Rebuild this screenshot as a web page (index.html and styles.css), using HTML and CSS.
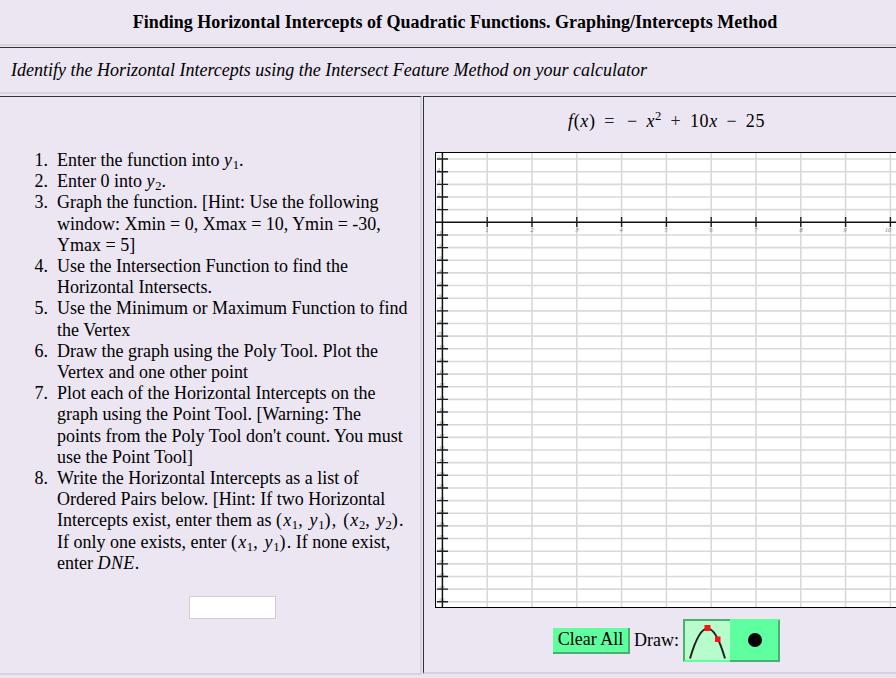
FILE: index.html
```html
<!DOCTYPE html>
<html lang="en">
<head>
<meta charset="utf-8">
<title>Finding Horizontal Intercepts of Quadratic Functions</title>
<link rel="stylesheet" href="styles.css">
</head>
<body>
<header class="title-bar"><h1>Finding Horizontal Intercepts of Quadratic Functions. Graphing/Intercepts Method</h1></header>
<section class="sub-bar"><p>Identify the Horizontal Intercepts using the Intersect Feature Method on your calculator</p></section>
<main class="panes">
  <section class="left">
    <ol class="steps">
      <li>Enter the function into <span class="m">y<sub>1</sub></span>.</li>
      <li>Enter <span class="n">0</span> into <span class="m">y<sub>2</sub></span>.</li>
      <li>Graph the function. [Hint: Use the following window: Xmin = 0, Xmax = 10, Ymin = -30, Ymax = 5]</li>
      <li>Use the Intersection Function to find the Horizontal Intersects.</li>
      <li>Use the Minimum or Maximum Function to find the Vertex</li>
      <li>Draw the graph using the Poly Tool. Plot the Vertex and one other point</li>
      <li>Plot each of the Horizontal Intercepts on the graph using the Point Tool. [Warning: The points from the Poly Tool don't count. You must use the Point Tool]</li>
      <li>Write the Horizontal Intercepts as a list of Ordered Pairs below. [Hint: If two Horizontal Intercepts exist, enter them as <span class="mg">(<span class="m">x<sub>1</sub></span>, <span class="m">y<sub>1</sub></span>), (<span class="m">x<sub>2</sub></span>, <span class="m">y<sub>2</sub></span>)</span>. If only one exists, enter <span class="mg">(<span class="m">x<sub>1</sub></span>, <span class="m">y<sub>1</sub></span>)</span>. If none exist, enter <span class="m dne">DNE</span>.</li>
    </ol>
    <input class="answer" type="text" aria-label="Answer">
  </section>
  <section class="right">
    <div class="formula"><span class="m">f</span>(<span class="m">x</span>) <span class="op">=</span> <span class="op">−</span> <span class="m">x</span><sup>2</sup> <span class="op">+</span> 10<span class="m">x</span> <span class="op">−</span> 25</div>
    <div class="graph">
      <svg class="plot" width="472" height="454" viewBox="0 0 472 454" xmlns="http://www.w3.org/2000/svg">
        <path class="grid" d="M0 6.05H472M0 18.7H472M0 31.35H472M0 44H472M0 56.65H472M0 81.95H472M0 94.6H472M0 107.25H472M0 119.9H472M0 132.55H472M0 145.2H472M0 157.85H472M0 170.5H472M0 183.15H472M0 195.8H472M0 208.45H472M0 221.1H472M0 233.75H472M0 246.4H472M0 259.05H472M0 271.7H472M0 284.35H472M0 297H472M0 309.65H472M0 322.3H472M0 334.95H472M0 347.6H472M0 360.25H472M0 372.9H472M0 385.55H472M0 398.2H472M0 410.85H472M0 423.5H472M0 436.15H472M0 448.8H472M51.2 0V454M96 0V454M140.8 0V454M185.6 0V454M230.4 0V454M275.2 0V454M320 0V454M364.8 0V454M409.6 0V454M454.4 0V454"/>
        <g class="xlabels">
          <text x="51" y="79">1</text><text x="96" y="79">2</text><text x="141" y="79">3</text><text x="185" y="79">4</text><text x="230" y="79">5</text><text x="275" y="79">6</text><text x="320" y="79">7</text><text x="365" y="79">8</text><text x="409" y="79">9</text><text x="452" y="79">10</text>
        </g>
        <g class="ylabels">
          <text x="1.500" y="5">5</text><text x="1.500" y="18">4</text><text x="1.500" y="30">3</text><text x="1.500" y="43">2</text><text x="1.500" y="56">1</text>
          <text x="1.500" y="81">-1</text><text x="1.500" y="94">-2</text><text x="1.500" y="106">-3</text><text x="1.500" y="119">-4</text><text x="1.500" y="132">-5</text><text x="1.500" y="144">-6</text><text x="1.500" y="157">-7</text><text x="1.500" y="170">-8</text><text x="1.500" y="182">-9</text><text x="1.500" y="195">-10</text><text x="1.500" y="208">-11</text><text x="1.500" y="220">-12</text><text x="1.500" y="233">-13</text><text x="1.500" y="246">-14</text><text x="1.500" y="258">-15</text><text x="1.500" y="271">-16</text><text x="1.500" y="284">-17</text><text x="1.500" y="296">-18</text><text x="1.500" y="309">-19</text><text x="1.500" y="322">-20</text><text x="1.500" y="334">-21</text><text x="1.500" y="347">-22</text><text x="1.500" y="360">-23</text><text x="1.500" y="372">-24</text><text x="1.500" y="385">-25</text><text x="1.500" y="398">-26</text><text x="1.500" y="410">-27</text><text x="1.500" y="423">-28</text><text x="1.500" y="436">-29</text><text x="1.500" y="448">-30</text>
        </g>
        <path class="axis" d="M0 69.3H472M6.400 0V454"/>
        <path class="tick" d="M1 6.05h11M1 18.7h11M1 31.35h11M1 44h11M1 56.65h11M1 81.95h11M1 94.6h11M1 107.25h11M1 119.9h11M1 132.55h11M1 145.2h11M1 157.85h11M1 170.5h11M1 183.15h11M1 195.8h11M1 208.45h11M1 221.1h11M1 233.75h11M1 246.4h11M1 259.05h11M1 271.7h11M1 284.35h11M1 297h11M1 309.65h11M1 322.3h11M1 334.95h11M1 347.6h11M1 360.25h11M1 372.9h11M1 385.55h11M1 398.2h11M1 410.85h11M1 423.5h11M1 436.15h11M1 448.8h11M51.2 64v10M96 64v10M140.8 64v10M185.6 64v10M230.4 64v10M275.2 64v10M320 64v10M364.8 64v10M409.6 64v10M454.4 64v10"/>
      </svg>
    </div>
    <div class="toolbar">
      <button class="clear" type="button">Clear All</button>
      <span class="draw-label">Draw:</span>
      <div class="tools">
        <button class="tool tool-active" type="button" aria-label="Poly tool">
          <svg width="45" height="41" viewBox="0 0 45 41" xmlns="http://www.w3.org/2000/svg">
            <path class="curve" d="M5 37.500Q22.500 -22.500 40 37.500"/>
            <rect class="pt" x="19.500" y="4" width="6" height="6"/>
            <rect class="pt" x="30" y="15.500" width="5.500" height="5.500"/>
          </svg>
        </button>
        <button class="tool tool-idle" type="button" aria-label="Point tool">
          <svg width="48" height="41" viewBox="0 0 48 41" xmlns="http://www.w3.org/2000/svg">
            <circle cx="25" cy="19" r="7"/>
          </svg>
        </button>
      </div>
    </div>
  </section>
</main>
</body>
</html>
```

FILE: styles.css
```css
html, body { margin: 0; padding: 0; height: 678px; overflow: hidden; }
body {
  background: #ebe6f2;
  color: #000;
  font-family: "Liberation Serif", "Times New Roman", serif;
  font-size: 18px;
}
.title-bar {
  box-sizing: border-box;
  height: 46px;
  padding: 1px 0 0 14px;
  border-bottom: 2px solid #d6d3da;
  margin-bottom: 1px;
  display: flex;
  align-items: center;
  justify-content: center;
}
.title-bar h1 { margin: 0; font-size: 18px; font-weight: bold; }
.sub-bar {
  box-sizing: border-box;
  height: 47px;
  border-top: 1px solid #333;
  border-bottom: 2px solid #d6d3da;
  margin-bottom: 2px;
  display: flex;
  align-items: center;
  padding: 1px 0 0 11px;
}
.sub-bar p { margin: 0; font-style: italic; }
.panes { display: flex; align-items: flex-start; }
.left {
  width: 420px;
  height: 523px;
  flex: none;
  border-top: 1px solid #333;
  border-right: 2px solid #d6d3da;
  border-bottom: 2px solid #d6d3da;
  margin-right: 1px;
  padding-top: 53px;
}
.steps { margin: 0; padding: 0 11.5px 0 57px; line-height: 21.2px; }
.steps li::marker { content: counter(list-item) ".\00a0\00a0"; }
.m { font-style: italic; letter-spacing: 0.7px; }
.mg { letter-spacing: 1.2px; white-space: nowrap; }
.dne { letter-spacing: 0.4px; }
.n { font-style: normal; }
sub { font-size: 70%; font-style: normal; line-height: 0; vertical-align: -3px; letter-spacing: 0; }
sup { font-size: 70%; line-height: 0; vertical-align: 7px; }
.answer {
  display: block;
  box-sizing: border-box;
  width: 87px;
  height: 23px;
  margin: 22px 0 0 189px;
  padding: 0;
  background: #fff;
  border: 1px solid #cfcdd2;
}
.right {
  width: 486px;
  height: 578px;
  flex: none;
  box-sizing: border-box;
  border-top: 1px solid #333;
  border-left: 1px solid #333;
  border-bottom: 2px solid #d6d3da;
}
.formula {
  height: 21px;
  line-height: 21px;
  margin: 14px 0 20px;
  text-align: center;
  white-space: nowrap;
  letter-spacing: 0.6px;
}
.op { margin: 0 3.5px; color: #222; }
.graph {
  box-sizing: border-box;
  margin-left: 11px;
  width: 475px;
  height: 456px;
  border: 1px solid #000;
  border-right: 0;
  background: #fff;
  overflow: hidden;
}
.plot { display: block; }
.grid { stroke: #d9d9d9; stroke-width: 1.6; fill: none; }
.axis { stroke: #111; stroke-width: 1.5; fill: none; }
.tick { stroke: #222; stroke-width: 1.4; fill: none; }
.xlabels text, .ylabels text {
  font-family: "Liberation Serif", serif;
  font-size: 6px;
  fill: #777;
}
.xlabels text { font-style: italic; text-anchor: middle; }
.ylabels text { font-size: 5px; }
.toolbar {
  display: flex;
  align-items: center;
  justify-content: center;
  margin-top: 11px;
  height: 43px;
}
.clear {
  box-sizing: border-box;
  width: 77px;
  height: 26px;
  margin: 0 4px 0 0;
  padding: 0;
  background: #5fff9f;
  border: 0;
  border-right: 2px solid #4caf72;
  border-bottom: 2px solid #4caf72;
  font: 18px "Liberation Serif", serif;
  color: #000;
}
.draw-label { margin-right: 4px; }
.tools { display: flex; }
.tool {
  display: block;
  box-sizing: border-box;
  height: 43px;
  padding: 0;
  border: 0;
}
.tool svg { display: block; }
.tool-active {
  width: 47px;
  background: #b6fdcb;
  border-top: 2px solid #4caf72;
  border-left: 2px solid #4caf72;
  border-bottom: 2px solid #5fff9f;
}
.tool-idle {
  width: 50px;
  background: #5fff9f;
  border-top: 2px solid #5fff9f;
  border-right: 2px solid #4caf72;
  border-bottom: 2px solid #4caf72;
}
.curve { fill: none; stroke: #222; stroke-width: 2; }
.pt { fill: #f11; }
```
